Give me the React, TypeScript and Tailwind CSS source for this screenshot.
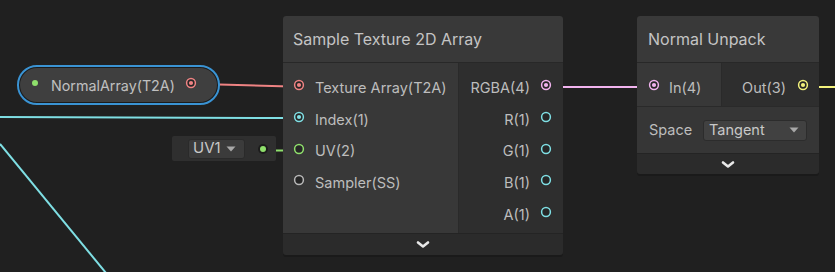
import React from "react";

const RED = "#ef8383";
const CYAN = "#7fdfe4";
const GREEN = "#8fe06c";
const PINK = "#f1b3ee";
const YELLOW = "#f3f27c";
const GRAY = "#b8b8b8";

function Port({ color, filled }: { color: string; filled?: boolean }) {
  return (
    <svg width="12" height="12" viewBox="0 0 12 12" className="shrink-0 relative -top-[2.5px]">
      <circle cx="6" cy="6" r="4.4" fill="#262626" stroke={color} strokeWidth="1.5" />
      {filled && <circle cx="6" cy="6" r="2.1" fill={color} />}
    </svg>
  );
}

function Chevron() {
  return (
    <svg width="14" height="9" viewBox="0 0 14 9">
      <path d="M2 2.5 L7 6.5 L12 2.5" fill="none" stroke="#e8e8e8" strokeWidth="2.6" strokeLinecap="round" strokeLinejoin="round" />
    </svg>
  );
}

function Tri() {
  return (
    <svg width="10" height="6" viewBox="0 0 10 6">
      <path d="M0.5 0.5 L9.5 0.5 L5 5.5 Z" fill="#a8a8a8" />
    </svg>
  );
}

function InRow({ label, color, filled }: { label: string; color: string; filled?: boolean }) {
  return (
    <div className="h-[31.7px] flex items-center pl-[10px] gap-[10px]">
      <Port color={color} filled={filled} />
      <span>{label}</span>
    </div>
  );
}

function OutRow({ label, color, filled }: { label: string; color: string; filled?: boolean }) {
  return (
    <div className="h-[31.7px] flex items-center justify-end pr-[11px] gap-[10px]">
      <span>{label}</span>
      <Port color={color} filled={filled} />
    </div>
  );
}

export default function App() {
  return (
    <div
      className="relative w-[835px] h-[272px] bg-[#202020] overflow-hidden text-[#bdbdbd]"
      style={{ fontFamily: "Inter, 'Noto Sans', sans-serif" }}
    >
      {/* edges */}
      <svg className="absolute inset-0" width="835" height="272">
        <line x1="0" y1="117" x2="290" y2="118" stroke={CYAN} strokeWidth="2" />
        <line x1="0" y1="144" x2="106" y2="273" stroke={CYAN} strokeWidth="2" />
        <line x1="219" y1="84.5" x2="290" y2="86.5" stroke={RED} strokeWidth="2" />
        <line x1="270" y1="150.5" x2="295" y2="150.5" stroke={GREEN} strokeWidth="2" />
        <line x1="555" y1="87" x2="640" y2="87" stroke={PINK} strokeWidth="2" />
        <line x1="810" y1="87" x2="835" y2="87" stroke={YELLOW} strokeWidth="2" />
      </svg>

      {/* Property node */}
      <div className="absolute left-[17px] top-[65px] w-[203px] h-[40px] rounded-full border-2 border-[#3a93d3] bg-[#1b1b1b] p-[1px]">
        <div className="w-full h-full rounded-full bg-[#3f3f3f] flex items-center pl-[12px] pr-[20px]">
          <span className="w-[6px] h-[6px] rounded-full bg-[#8fe06c] shrink-0 relative -top-[2px]" />
          <span className="ml-[13px] text-[14.3px] text-[#c0c0c0] flex-1 relative top-[1px]">NormalArray(T2A)</span>
          <Port color={RED} filled />
        </div>
      </div>

      {/* UV1 inline input */}
      <div className="absolute left-[172px] top-[136px] w-[104px] h-[25px] bg-[#2f2f2f] rounded-[2px] flex items-center pl-[16px] pr-[8px]">
        <div className="w-[57px] h-[20px] bg-[#3b3b3b] rounded-[3px] border border-[#2a2a2a] flex items-center justify-between pl-[4px] pr-[8px] text-[15px] text-[#c8c8c8]">
          <span>UV1</span>
          <Tri />
        </div>
        <div className="ml-auto w-[10px] h-[10px] rounded-full bg-[#1c1c1c] flex items-center justify-center">
          <span className="w-[6px] h-[6px] rounded-full bg-[#8fe06c]" />
        </div>
      </div>

      {/* Sample Texture 2D Array */}
      <div className="absolute left-[283px] top-[16px] w-[280px] bg-[#1a1a1a] rounded-[3px] pb-[2px] text-[14.5px]">
        <div className="h-[47px] bg-[#393939] rounded-t-[3px] flex items-center pl-[10px] text-[16px] text-[#c4c4c4] border-b border-[#282828]">
          Sample Texture 2D Array
        </div>
        <div className="flex h-[170px]">
          <div className="w-[176px] bg-[#383838] pt-[9px] border-r border-[#2a2a2a]">
            <InRow label="Texture Array(T2A)" color={RED} filled />
            <InRow label="Index(1)" color={CYAN} filled />
            <InRow label="UV(2)" color={GREEN} />
            <InRow label="Sampler(SS)" color={GRAY} />
          </div>
          <div className="flex-1 bg-[#2e2e2e] pt-[9px]">
            <OutRow label="RGBA(4)" color={PINK} filled />
            <OutRow label="R(1)" color={CYAN} />
            <OutRow label="G(1)" color={CYAN} />
            <OutRow label="B(1)" color={CYAN} />
            <OutRow label="A(1)" color={CYAN} />
          </div>
        </div>
        <div className="h-[22px] bg-[#2b2b2b] border-t border-[#242424] rounded-b-[3px] flex items-center justify-center">
          <Chevron />
        </div>
      </div>

      {/* Normal Unpack */}
      <div className="absolute left-[637px] top-[16px] w-[182px] bg-[#1a1a1a] rounded-[3px] pb-[2px] text-[14.5px]">
        <div className="h-[47px] bg-[#393939] rounded-t-[3px] flex items-center pl-[11px] text-[16px] text-[#c4c4c4] border-b border-[#282828]">
          Normal Unpack
        </div>
        <div className="flex h-[43px]">
          <div className="w-[85px] bg-[#383838] flex items-center pl-[11px] pt-[6px] gap-[9px] border-r border-[#2a2a2a]">
            <Port color={PINK} filled />
            <span>In(4)</span>
          </div>
          <div className="flex-1 bg-[#2e2e2e] flex items-center justify-end pr-[10px] pt-[6px] gap-[11px]">
            <span>Out(3)</span>
            <Port color={YELLOW} filled />
          </div>
        </div>
        <div className="h-[47px] bg-[#363636] border-t border-[#2a2a2a] flex items-center pl-[12px] pr-[12px]">
          <span className="w-[54px]">Space</span>
          <div className="flex-1 h-[21px] bg-[#414141] rounded-[3px] border border-[#2c2c2c] flex items-center justify-between pl-[5px] pr-[7px] text-[#c8c8c8]">
            <span>Tangent</span>
            <Tri />
          </div>
        </div>
        <div className="h-[21px] bg-[#2b2b2b] border-t border-[#242424] rounded-b-[3px] flex items-center justify-center">
          <Chevron />
        </div>
      </div>
    </div>
  );
}
